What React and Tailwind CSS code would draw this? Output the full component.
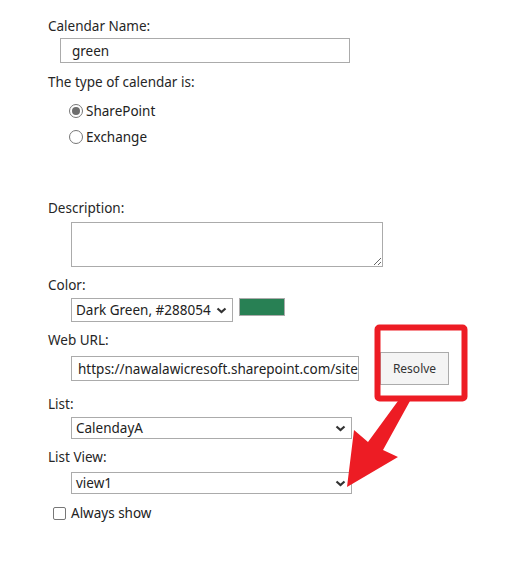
import React from 'react';

const font = { fontFamily: '"Noto Sans", "Open Sans", Arial, sans-serif' };

function Chevron() {
  return (
    <svg width="11" height="7" viewBox="0 0 11 7" className="shrink-0">
      <path d="M1.5 1.5 L5.5 5 L9.5 1.5" fill="none" stroke="#333" strokeWidth="2.2" />
    </svg>
  );
}

function Select({ value, className }) {
  return (
    <div className={`flex items-center justify-between border border-[#ababab] bg-white pl-[4px] pr-[5px] text-[13.5px] text-[#222] ${className}`}>
      <span className="whitespace-nowrap">{value}</span>
      <Chevron />
    </div>
  );
}

function Radio({ checked, label }) {
  return (
    <div className="flex h-[26px] items-center pl-[21px]">
      <span className="flex h-[14px] w-[14px] items-center justify-center rounded-full border border-[#777] bg-white">
        {checked && <span className="h-[8px] w-[8px] rounded-full bg-[#6e6e6e]" />}
      </span>
      <span className="ml-[3px] text-[13.5px] text-[#222]">{label}</span>
    </div>
  );
}

export default function App() {
  return (
    <div className="relative h-[581px] w-[530px] overflow-hidden bg-white" style={font}>
      <div className="flex flex-col pl-[48px] pt-[16px] text-[13.5px] leading-[20px] text-[#262626]">
        <div className="h-5">Calendar Name:</div>
        <div className="ml-[12px] mt-[2px] flex h-[25px] w-[290px] items-center border border-[#ababab] px-[11px] text-[#222]">
          green
        </div>
        <div className="mt-[9px] h-5">The type of calendar is:</div>
        <div className="mt-[6px]">
          <Radio checked label="SharePoint" />
          <Radio label="Exchange" />
        </div>

        <div className="mt-[48px] h-5">Description:</div>
        <textarea
          readOnly
          className="ml-[23px] mt-[4px] h-[45px] w-[312px] resize border border-[#ababab] outline-none"
        />

        <div className="mt-[8px] h-5">Color:</div>
        <div className="ml-[23px] mt-[3px] flex items-start gap-[6px]">
          <Select value="Dark Green, #288054" className="h-[24px] w-[162px]" />
          <div className="h-[18px] w-[46px] border border-[#ababab] bg-[#288054]" />
        </div>

        <div className="mt-[8px] h-5">Web URL:</div>
        <div className="ml-[23px] mt-[2px] flex h-[33px] items-center">
          <div className="flex h-[25px] w-[288px] items-center overflow-hidden whitespace-nowrap border border-[#ababab] pl-[6px] text-[#222]">
            https://nawalawicresoft.sharepoint.com/sites/green
          </div>
          <div className="ml-[21px] flex h-[33px] w-[69px] items-center justify-center border border-[#ababab] bg-[#f4f4f4] text-[12px] text-[#333]">
            Resolve
          </div>
        </div>

        <div className="mt-[9px] h-5">List:</div>
        <Select value="CalendayA" className="ml-[23px] mt-[3px] h-[22px] w-[281px]" />

        <div className="mt-[8px] h-5">List View:</div>
        <Select value="view1" className="ml-[23px] mt-[5px] h-[22px] w-[281px]" />

        <div className="mt-[9px] flex h-5 items-center">
          <span className="ml-[5px] h-[13px] w-[13px] rounded-[2px] border border-[#777] bg-white" />
          <span className="ml-[5px] text-[#222]">Always show</span>
        </div>
      </div>

      {/* annotation overlay */}
      <svg className="pointer-events-none absolute left-0 top-0" width="530" height="581">
        <rect x="377.5" y="327.5" width="87" height="71" rx="2" fill="none" stroke="#ed1c24" strokeWidth="6" />
        <polygon
          points="398,401 410,401 383,450 398,457 347,487 354,430 368,442"
          fill="#ed1c24"
        />
      </svg>
    </div>
  );
}
